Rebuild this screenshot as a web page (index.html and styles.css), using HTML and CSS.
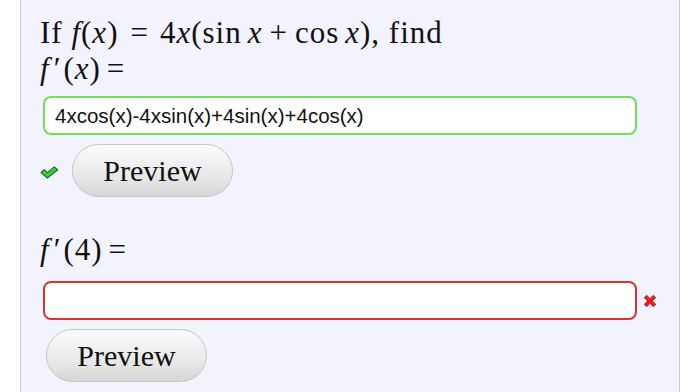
FILE: index.html
```html
<!DOCTYPE html>
<html>
<head>
<meta charset="utf-8">
<link rel="stylesheet" href="styles.css">
</head>
<body>
<div class="panel">
  <div class="question">
    <div class="math-line">If <i>f</i>(<i>x</i>)<span class="rel">=</span>4<i>x</i>(sin<span class="thin"></span><i>x</i><span class="bin">+</span>cos<span class="thin"></span><i>x</i>), find</div>
    <div class="math-line"><i>f</i><span class="prime">′</span>(<i>x</i>)<span class="eq">=</span></div>
  </div>
  <div class="answer-row first">
    <div class="answer-box correct">4xcos(x)-4xsin(x)+4sin(x)+4cos(x)</div>
  </div>
  <div class="button-row">
    <svg class="mark" width="19" height="13" viewBox="0 0 19 13"><path d="M1 6.5 L4.2 3.6 L7.3 6.6 L14.3 0.8 L17.8 3.8 L7.3 12 Z" fill="#33d03a" stroke="#246a28" stroke-width="1.1" stroke-linejoin="round"/></svg>
    <button class="preview">Preview</button>
  </div>
  <div class="math-line part2"><i>f</i><span class="prime">′</span>(4)<span class="eq">=</span></div>
  <div class="answer-row second">
    <div class="answer-box wrong"></div>
    <svg class="xmark" width="14" height="14" viewBox="0 0 16 16"><path d="M1.5 4.2 L4.2 1.5 L8 5.3 L11.8 1.5 L14.5 4.2 L10.7 8 L14.5 11.8 L11.8 14.5 L8 10.7 L4.2 14.5 L1.5 11.8 L5.3 8 Z" fill="#ea1f1f" stroke="#9a1414" stroke-width="1" stroke-linejoin="round"/></svg>
  </div>
  <div class="button-row plain">
    <button class="preview">Preview</button>
  </div>
</div>
</body>
</html>
```
FILE: styles.css
```css
html, body {
  margin: 0;
  padding: 0;
  background: #ffffff;
  height: 100%;
  overflow: hidden;
}
.panel {
  margin-left: 20px;
  width: 660px;
  height: 400px;
  background: #f3f3fd;
  border-left: 1px solid #c9c9dc;
  border-right: 1px solid #c9c9dc;
  padding: 15px 0 0 19px;
  box-sizing: border-box;
  font-family: "Liberation Serif", "DejaVu Serif", serif;
  color: #111;
}
.math-line {
  font-size: 31px;
  line-height: 36px;
  letter-spacing: 1px;
  white-space: nowrap;
}
.math-line i {
  font-style: italic;
}
.rel { margin: 0 11px 0 12px; }
.bin { margin: 0 7px; }
.thin { display: inline-block; width: 6px; }
.prime { margin: 0 2px 0 4px; }
.eq { margin-left: 6px; }
.answer-row {
  display: flex;
  align-items: center;
  gap: 6px;
}
.answer-row.first { margin-top: 9px; }
.answer-row.second { margin-top: 13px; }
.answer-box {
  margin-left: 3px;
  width: 594px;
  height: 39px;
  box-sizing: border-box;
  border-radius: 8px;
  background: #fff;
  font-family: "Liberation Sans", Arial, sans-serif;
  font-size: 20.5px;
  line-height: 35px;
  padding-left: 10px;
  color: #111;
}
.correct { border: 2px solid #6ee05a; }
.wrong { border: 2px solid #d63434; }
.xmark { margin-top: 1px; }
.button-row {
  display: flex;
  align-items: center;
  gap: 13px;
  margin-top: 9px;
}
.button-row.plain { margin-top: 9px; padding-left: 6px; }
.mark { margin-top: 3px; }
.preview {
  width: 161px;
  height: 53px;
  border-radius: 27px;
  border: 1px solid #c5c5c5;
  background: linear-gradient(#fbfbfb, #e9e9e9 60%, #d6d6d6);
  font-family: "Liberation Serif", "DejaVu Serif", serif;
  font-size: 30px;
  color: #111;
  padding: 0;
}
.part2 { margin-top: 35px; }
```
